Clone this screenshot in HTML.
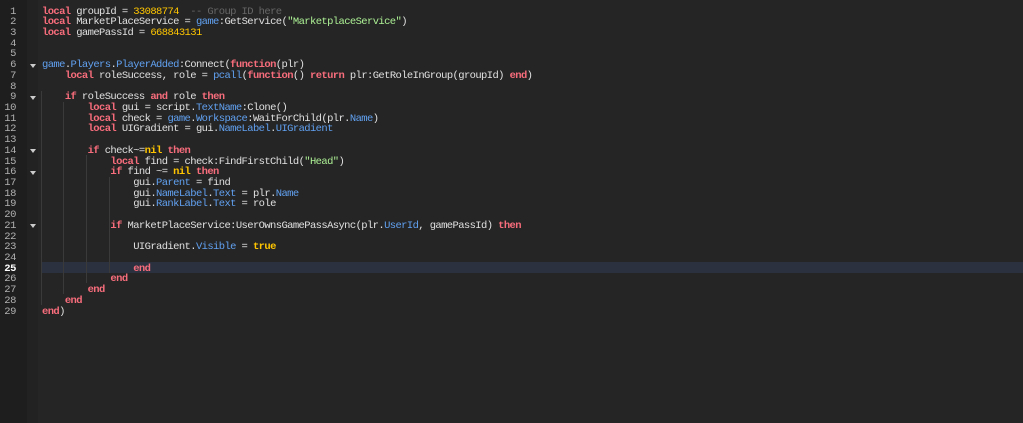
<!DOCTYPE html>
<html><head><meta charset="utf-8"><style>
html,body{margin:0;padding:0;width:1023px;height:423px;overflow:hidden;background:#252525;}
.g{position:absolute;left:0;top:0;width:27px;height:423px;background:#1e1e1e;}
.g2{position:absolute;left:27px;top:0;width:11px;height:423px;background:#222222;}
.ln{position:absolute;left:0;width:16px;text-align:right;color:#b0b0b0;font:10.5px "Liberation Mono",monospace;letter-spacing:-0.4px;line-height:10.72px;}
.code{position:absolute;left:42px;top:6.5px;font:10.5px "Liberation Mono",monospace;letter-spacing:-0.6px;line-height:10.72px;color:#e0e0e0;white-space:pre;}
.k{color:#f86d7c;font-weight:bold}
.n{color:#ffc600}
.b{color:#ffc600;font-weight:bold}
.s{color:#adf195}
.p{color:#61a1f1}
.c{color:#666}
.hl{position:absolute;left:41px;right:0;top:262px;height:11px;background:#2c3140;}
.ig{position:absolute;width:1px;background:#3a3a3a;}
.ar{position:absolute;left:30px;width:0;height:0;border-left:3px solid transparent;border-right:3px solid transparent;border-top:4px solid #ccc;}
</style></head><body>
<div class="g"></div><div class="g2"></div>
<div class="hl"></div>
<div class="ig" style="left:41px;top:91px;height:214px"></div>
<div class="ig" style="left:63px;top:102px;height:192px"></div>
<div class="ig" style="left:86px;top:155px;height:128px"></div>
<div class="ig" style="left:109px;top:177px;height:96px"></div>
<div class="ln" style="top:6.5px">1<br>2<br>3<br>4<br>5<br>6<br>7<br>8<br>9<br>10<br>11<br>12<br>13<br>14<br>15<br>16<br>17<br>18<br>19<br>20<br>21<br>22<br>23<br>24<br><span style="color:#fff;font-weight:bold">25</span><br>26<br>27<br>28<br>29</div>
<div class="ar" style="top:64px"></div>
<div class="ar" style="top:96px"></div>
<div class="ar" style="top:149px"></div>
<div class="ar" style="top:171px"></div>
<div class="ar" style="top:224px"></div>
<div class="code"><span class="k">local</span> groupId = <span class="n">33088774</span>  <span class="c">-- Group ID here</span>
<span class="k">local</span> MarketPlaceService = <span class="p">game</span>:GetService(<span class="s">"MarketplaceService"</span>)
<span class="k">local</span> gamePassId = <span class="n">668843131</span>


<span class="p">game</span>.<span class="p">Players</span>.<span class="p">PlayerAdded</span>:Connect(<span class="k">function</span>(plr)
    <span class="k">local</span> roleSuccess, role = <span class="p">pcall</span>(<span class="k">function</span>() <span class="k">return</span> plr:GetRoleInGroup(groupId) <span class="k">end</span>)

    <span class="k">if</span> roleSuccess <span class="k">and</span> role <span class="k">then</span>
        <span class="k">local</span> gui = script.<span class="p">TextName</span>:Clone()
        <span class="k">local</span> check = <span class="p">game</span>.<span class="p">Workspace</span>:WaitForChild(plr.<span class="p">Name</span>)
        <span class="k">local</span> UIGradient = gui.<span class="p">NameLabel</span>.<span class="p">UIGradient</span>

        <span class="k">if</span> check~=<span class="b">nil</span> <span class="k">then</span>
            <span class="k">local</span> find = check:FindFirstChild(<span class="s">"Head"</span>)
            <span class="k">if</span> find ~= <span class="b">nil</span> <span class="k">then</span>
                gui.<span class="p">Parent</span> = find
                gui.<span class="p">NameLabel</span>.<span class="p">Text</span> = plr.<span class="p">Name</span>
                gui.<span class="p">RankLabel</span>.<span class="p">Text</span> = role

            <span class="k">if</span> MarketPlaceService:UserOwnsGamePassAsync(plr.<span class="p">UserId</span>, gamePassId) <span class="k">then</span>

                UIGradient.<span class="p">Visible</span> = <span class="b">true</span>

                <span class="k">end</span>
            <span class="k">end</span>
        <span class="k">end</span>
    <span class="k">end</span>
<span class="k">end</span>)</div>
</body></html>
